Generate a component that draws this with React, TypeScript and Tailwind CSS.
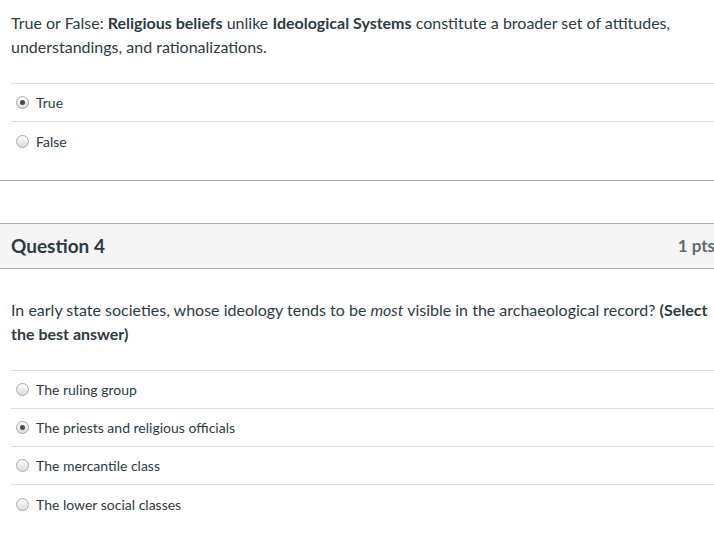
import React from "react";

type Option = { label: string; checked?: boolean };

function Radio({ checked }: { checked?: boolean }) {
  return (
    <span className="relative inline-flex h-[13px] w-[13px] shrink-0 items-center justify-center rounded-full border border-[#a9a9a9] bg-gradient-to-b from-[#fdfdfd] to-[#dcdcdc]">
      {checked && <span className="h-[5px] w-[5px] rounded-full bg-[#4a4a4a]" />}
    </span>
  );
}

function AnswerList({ options }: { options: Option[] }) {
  return (
    <div className="ml-[11px] border-t border-[#dcdcdc]">
      {options.map((o, i) => (
        <div
          key={o.label}
          className={`flex h-[38px] items-center gap-[7px] pl-[5px] ${i < options.length - 1 ? "border-b border-[#dcdcdc]" : ""}`}
        >
          <Radio checked={o.checked} />
          <span className="text-[14px] text-[#2d3b45]">{o.label}</span>
        </div>
      ))}
    </div>
  );
}

export default function App() {
  return (
    <div className="w-[714px] h-[535px] overflow-hidden bg-white text-[#2d3b45]" style={{ fontFamily: "Lato, 'Liberation Sans', sans-serif" }}>
      {/* previous question body */}
      <div className="border-b border-[#aaaaaa] pb-[20px]">
        <p className="pl-[11px] pr-0 pt-[11px] pb-[24px] text-[16px] leading-[24px]">
          True or False: <b>Religious beliefs</b> unlike <b>Ideological Systems</b> constitute a broader set of attitudes,
          understandings, and rationalizations.
        </p>
        <AnswerList options={[{ label: "True", checked: true }, { label: "False" }]} />
      </div>

      <div className="h-[42px]" />

      {/* Question 4 */}
      <div className="flex h-[46px] items-center justify-between border-y border-[#aaaaaa] bg-[#f5f5f5] pl-[11px]">
        <h2 className="text-[19px] font-bold text-[#2d3b45]">Question 4</h2>
        <span className="mr-[-1px] text-[17px] font-bold text-[#66696b]">1 pts</span>
      </div>

      <p className="pl-[11px] pr-0 pt-[29px] pb-[24px] text-[16px] leading-[24px]">
        In early state societies, whose ideology tends to be <i>most</i> visible in the archaeological record?{" "}
        <b>(Select the best answer)</b>
      </p>
      <AnswerList
        options={[
          { label: "The ruling group" },
          { label: "The priests and religious officials", checked: true },
          { label: "The mercantile class" },
          { label: "The lower social classes" },
        ]}
      />
    </div>
  );
}
